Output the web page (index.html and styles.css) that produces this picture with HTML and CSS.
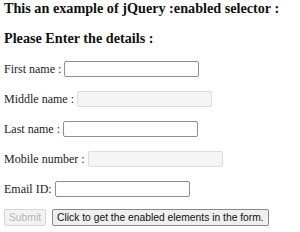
FILE: index.html
```html
<!DOCTYPE html>
<html>
<head>
  <title>jQuery :enabled selector</title>
  <link rel="stylesheet" href="styles.css">
</head>
<body>
  <h3 class="title">This an example of jQuery :enabled selector :</h3>
  <h3 class="title sub">Please Enter the details :</h3>

  <form class="details">
    <div class="row">First name : <input type="text" class="field"></div>
    <div class="row">Middle name : <input type="text" class="field" disabled></div>
    <div class="row">Last name : <input type="text" class="field"></div>
    <div class="row">Mobile number : <input type="text" class="field" disabled></div>
    <div class="row">Email ID: <input type="text" class="field"></div>
    <div class="row buttons">
      <button type="button" class="btn" disabled>Submit</button>
      <button type="button" class="btn">Click to get the enabled elements in the form.</button>
    </div>
  </form>
</body>
</html>
```

FILE: styles.css
```css
body {
  margin: 0;
  padding: 0 4px;
  background-color: #ffffff;
  color: #222;
  font-family: 'Liberation Serif', 'Times New Roman', serif;
  font-size: 12px;
}

.title {
  font-size: 14.2px;
  line-height: 16px;
  color: #111;
  margin: 0;
}

.title.sub {
  margin-top: 14px;
  margin-bottom: 8px;
}

.row {
  display: flex;
  align-items: center;
  height: 30px;
}

.field {
  width: 135px;
  height: 16px;
  box-sizing: border-box;
  border: 1px solid #8f8f8f;
  border-radius: 2px;
  padding: 0 3px;
  margin: 0 0 0 3px;
  background: #fff;
  font-size: 11px;
}

.field:disabled {
  border-color: #dcdcdc;
  background: #f5f5f5;
}

.buttons {
  height: 27px;
  gap: 6px;
}

.btn {
  height: 17px;
  padding: 0 4px;
  margin: 0;
  font-family: 'Liberation Sans', Arial, sans-serif;
  font-size: 10.3px;
  color: #111;
  background: #efefef;
  border: 1px solid #8a8a8a;
  border-radius: 2px;
}

.btn:disabled {
  color: #b5b5b5;
  border-color: #d6d6d6;
  background: #f3f3f3;
}
```
